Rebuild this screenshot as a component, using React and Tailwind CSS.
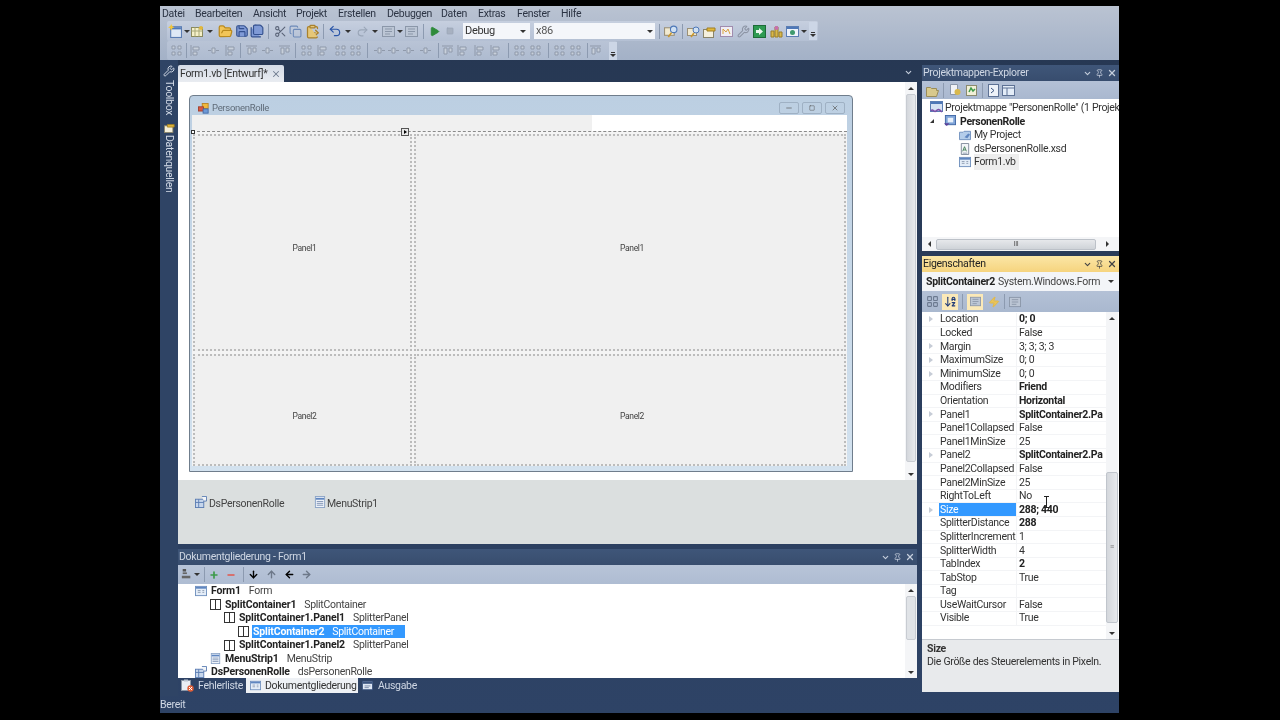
import { ChevronDown, Pin, X, Play, Square, Minus, Plus, ArrowDown, ArrowUp, ArrowLeft, ArrowRight, Undo2, Redo2, Scissors, Copy, ClipboardPaste, Save, SaveAll, FolderOpen, Zap, ArrowDownAZ, LayoutGrid, Wrench } from "lucide-react";

const font = "font-['Roboto','Liberation_Sans',Arial,sans-serif]";

const menu = [
  ["Datei", "w-[33px]"],
  ["Bearbeiten", "w-[58px]"],
  ["Ansicht", "w-[43px]"],
  ["Projekt", "w-[42px]"],
  ["Erstellen", "w-[49px]"],
  ["Debuggen", "w-[54px]"],
  ["Daten", "w-[37px]"],
  ["Extras", "w-[39px]"],
  ["Fenster", "w-[44px]"],
  ["Hilfe", "w-[30px]"],
];

const props = [
  { n: "Location", v: "0; 0", b: true, e: true },
  { n: "Locked", v: "False" },
  { n: "Margin", v: "3; 3; 3; 3", e: true },
  { n: "MaximumSize", v: "0; 0", e: true },
  { n: "MinimumSize", v: "0; 0", e: true },
  { n: "Modifiers", v: "Friend", b: true },
  { n: "Orientation", v: "Horizontal", b: true },
  { n: "Panel1", v: "SplitContainer2.Pa", b: true, e: true },
  { n: "Panel1Collapsed", v: "False" },
  { n: "Panel1MinSize", v: "25" },
  { n: "Panel2", v: "SplitContainer2.Pa", b: true, e: true },
  { n: "Panel2Collapsed", v: "False" },
  { n: "Panel2MinSize", v: "25" },
  { n: "RightToLeft", v: "No" },
  { n: "Size", v: "288; 440", b: true, e: true, sel: true },
  { n: "SplitterDistance", v: "288", b: true },
  { n: "SplitterIncrement", v: "1" },
  { n: "SplitterWidth", v: "4" },
  { n: "TabIndex", v: "2", b: true },
  { n: "TabStop", v: "True" },
  { n: "Tag", v: "" },
  { n: "UseWaitCursor", v: "False" },
  { n: "Visible", v: "True" },
];

/* small 13x13 drawings of the VS icons */
function Ico({ kind, size = 13 }) {
  const body = {
    form: (
      <>
        <rect x="0.5" y="1.5" width="12" height="10" fill="#e4edf8" stroke="#6f8fbd" />
        <rect x="1" y="2" width="11" height="2" fill="#5f86c0" />
        <path d="M3 6h3M3 8h3M8 6h2M8 8h2" stroke="#8f9db2" />
      </>
    ),
    solution: (
      <>
        <rect x="0.5" y="0.5" width="12" height="10" fill="#d6e2f3" stroke="#5b7db3" />
        <rect x="1" y="1" width="11" height="2" fill="#4e78b8" />
        <path d="M1 10c2-3 3 2 5 0s3-2 6 1" fill="none" stroke="#7a4fa8" strokeWidth="1.6" />
      </>
    ),
    project: (
      <>
        <rect x="1.5" y="0.5" width="11" height="10" fill="#7fa4d8" stroke="#3f66a5" />
        <rect x="4" y="3" width="6" height="5" fill="#e8f0fa" />
        <path d="M0 9l3 3 3-3" fill="#5c3f99" />
      </>
    ),
    myproject: (
      <>
        <path d="M0.5 3.5h4l1-1h7v9h-12z" fill="#b4cdea" stroke="#6f8fbd" />
        <path d="M6 9l4-4 2 1-3 4z" fill="#5f86c0" />
      </>
    ),
    xsd: (
      <>
        <path d="M2.5 0.5h8v12h-8z" fill="#f3f5f8" stroke="#7c8798" />
        <path d="M4 9l2-5 2 5M5 7.5h2" fill="none" stroke="#3f7a52" />
        <path d="M4 11h5" stroke="#8f9db2" />
      </>
    ),
    menustrip: (
      <>
        <rect x="1.5" y="0.5" width="10" height="12" fill="#eef3fa" stroke="#8ba3c6" />
        <rect x="2" y="2" width="9" height="2" fill="#5f86c0" />
        <path d="M3 6h7M3 8h7M3 10h7" stroke="#7f93b3" />
      </>
    ),
    dataset: (
      <>
        <rect x="0.5" y="3.5" width="9" height="9" fill="#c6d6ec" stroke="#5b7db3" />
        <path d="M0.5 7h9M4 3.5v9" stroke="#5b7db3" />
        <path d="M7.5 0.5h5v5h-3" fill="#f3f5f8" stroke="#5b7db3" />
      </>
    ),
    cubes: (
      <>
        <rect x="5" y="0.5" width="7" height="6" fill="#f0b93c" stroke="#b8801e" />
        <rect x="0.5" y="4.5" width="6" height="5" fill="#d9593f" stroke="#a03a28" />
        <rect x="6" y="7" width="6" height="5" fill="#6f9ad6" stroke="#3f66a5" />
      </>
    ),
    errors: (
      <>
        <rect x="0.5" y="1.5" width="9" height="10" fill="#e9eef5" stroke="#8a97a8" />
        <rect x="3" y="0.5" width="4" height="2" fill="#b8c2d0" />
        <circle cx="9.5" cy="9.5" r="3.2" fill="#e0603a" />
        <path d="M8 8l3 3M11 8l-3 3" stroke="#fff" />
      </>
    ),
    output: (
      <>
        <rect x="0.5" y="1.5" width="12" height="10" fill="#dfe8f5" stroke="#39537e" />
        <rect x="1" y="2" width="11" height="2.5" fill="#39537e" />
        <path d="M3 7h7M3 9h5" stroke="#6f82a0" />
      </>
    ),
    newproject: (
      <>
        <rect x="2.5" y="2.5" width="10" height="10" fill="#dfe9f6" stroke="#5b7db3" />
        <rect x="3" y="3" width="9" height="2" fill="#4e78b8" />
        <path d="M3 0l1 2 2 1-2 1-1 2-1-2-2-1 2-1z" fill="#f2c63a" />
      </>
    ),
    additem: (
      <>
        <rect x="0.5" y="2.5" width="11" height="9" fill="#f5f0c8" stroke="#8a8a5e" />
        <path d="M0.5 6h11M4 2.5v9M8 2.5v9" stroke="#a8a878" />
        <circle cx="10" cy="3" r="2" fill="#e2b83a" />
      </>
    ),
    nav: (
      <>
        <rect x="0.5" y="1.5" width="12" height="10" fill="#bcc6d5" stroke="#8b97a9" />
        <path d="M3 4h7M3 6.5h7M3 9h5" stroke="#8b97a9" />
      </>
    ),
    find: (
      <>
        <rect x="0.5" y="3.5" width="9" height="7" fill="#f2ead0" stroke="#9a9078" />
        <circle cx="9" cy="5" r="3" fill="#cfe0f3" stroke="#4e78b8" />
        <path d="M7 8l-3 4" stroke="#c9962c" strokeWidth="1.5" />
      </>
    ),
    props: (
      <>
        <rect x="0.5" y="4.5" width="10" height="8" fill="#f5f0dc" stroke="#8a8468" />
        <path d="M4 3h8v3H4z" fill="#e2b83a" stroke="#a07f22" />
      </>
    ),
    object: (
      <>
        <rect x="0.5" y="1.5" width="12" height="10" fill="#f0eef4" stroke="#a08cae" />
        <path d="M3 9V4l3 3 2-3 2 5" fill="none" stroke="#d9a23c" />
      </>
    ),
    start: (
      <>
        <rect x="0.5" y="0.5" width="12" height="12" fill="#2e9a52" stroke="#1d6b38" />
        <path d="M3 5h3V3l4 3.5L6 10V8H3z" fill="#eaf7ee" />
      </>
    ),
    team: (
      <>
        <path d="M1 12V6h3v6zM5 12V2h3v10zM9 12V7h3v5z" fill="#d8b84c" stroke="#9a7f28" />
        <circle cx="6.5" cy="3" r="2" fill="#c76fb0" />
      </>
    ),
    web: (
      <>
        <rect x="0.5" y="1.5" width="12" height="10" fill="#eef3fa" stroke="#5b7db3" />
        <rect x="1" y="2" width="11" height="2" fill="#4e78b8" />
        <circle cx="6.5" cy="7.5" r="2.5" fill="#3f9a6e" />
      </>
    ),
    folder: (
      <path d="M0.5 3.5h4l1 1h5v2h2l-2 6h-10z" fill="#d8c98c" stroke="#9a8c58" />
    ),
    refresh: (
      <>
        <rect x="1.5" y="1.5" width="10" height="10" fill="#f2f0d8" stroke="#8a8a6e" />
        <path d="M4 8l2-4 2 3 2-2" fill="none" stroke="#3f9a4a" strokeWidth="1.5" />
      </>
    ),
    showall: (
      <>
        <path d="M1.5 0.5h7v10h-7z" fill="#f0f2f6" stroke="#8b97a9" />
        <circle cx="8.5" cy="8" r="3" fill="#d8b84c" />
      </>
    ),
    code: (
      <>
        <rect x="1.5" y="0.5" width="10" height="12" fill="#eef2f8" stroke="#5e7295" />
        <path d="M4 4l3 2.5L4 9" fill="none" stroke="#39537e" />
      </>
    ),
    design: (
      <>
        <rect x="0.5" y="1.5" width="12" height="10" fill="#e4edf8" stroke="#5e7295" />
        <path d="M0.5 4h12M5 4v7" stroke="#5e7295" />
      </>
    ),
    outline: (
      <>
        <rect x="2" y="0" width="4" height="3" fill="#555" />
        <rect x="2" y="4" width="5" height="2" fill="#666" />
        <rect x="1" y="8" width="10" height="3" fill="#666" />
      </>
    ),
  }[kind];
  return (
    <svg width={size} height={size} viewBox="0 0 13 13" className="shrink-0">
      {body}
    </svg>
  );
}

function Sep() {
  return <span className="block shrink-0 w-px h-[15px] bg-[#8c9ab0]" />;
}

function Drop() {
  return <span className="block shrink-0 w-0 h-0 border-x-[3px] border-x-transparent border-t-[3px] border-t-[#333]" />;
}

function Slot({ w, children }) {
  return <span className={`flex ${w} h-full justify-center items-center shrink-0`}>{children}</span>;
}

function Grip() {
  return (
    <span className="w-[8px] h-[18px] shrink-0 bg-[#ccd6e6] flex flex-col items-center justify-end pb-[3px] gap-px">
      <span className="w-[4px] h-px bg-[#333]" />
      <Drop />
    </span>
  );
}

// pale disabled layout icons of the second toolbar
function LayoutIcon({ kind = 0 }) {
  const d = [
    "M2 1v11M4 3h6v3H4zM4 8h4v3H4z",
    "M1 2h11M3 4v6h3V4zM8 4v4h3V4z",
    "M1 6.5h3M9 6.5h3M5 4h3v5H5z",
    "M2 2h3v3H2zM8 2h3v3H8zM2 8h3v3H2zM8 8h3v3H8z",
  ][kind];
  return (
    <svg width="13" height="13" viewBox="0 0 13 13" className="shrink-0">
      <path d={d} fill="#c8d0db" stroke="#8f99aa" strokeWidth="1" />
    </svg>
  );
}

function Toolbar1() {
  return (
    <div className="flex items-center h-[20px] ml-[7px] w-[651px] rounded-[2px] bg-gradient-to-b from-[#c6cfdf] to-[#b4c0d4]">
      <Slot w="w-[16px]"><Ico kind="newproject" size={14} /></Slot>
      <Slot w="w-[8px]"><Drop /></Slot>
      <Slot w="w-[12px]"><Ico kind="additem" /></Slot>
      <Slot w="w-[14px]"><Drop /></Slot>
      <Slot w="w-[16px]"><FolderOpen size={15} className="shrink-0 text-[#b98a1e] fill-[#f2c558]" /></Slot>
      <Slot w="w-[18px]"><Save size={14} className="shrink-0 text-[#34518f] fill-[#7f9ad6]" /></Slot>
      <Slot w="w-[12px]"><SaveAll size={14} className="shrink-0 text-[#34518f] fill-[#7f9ad6]" /></Slot>
      <Slot w="w-[10px]"><Sep /></Slot>
      <Slot w="w-[14px]"><Scissors size={13} className="shrink-0 text-[#5a6478]" /></Slot>
      <Slot w="w-[16px]"><Copy size={13} className="shrink-0 text-[#6d8ab8]" /></Slot>
      <Slot w="w-[18px]"><ClipboardPaste size={15} className="shrink-0 text-[#a9812d] fill-[#e6c778]" /></Slot>
      <Slot w="w-[4px]"><Sep /></Slot>
      <Slot w="w-[20px]"><Undo2 size={14} className="shrink-0 text-[#2a55a8]" /></Slot>
      <Slot w="w-[6px]"><Drop /></Slot>
      <Slot w="w-[22px]"><Redo2 size={13} className="shrink-0 text-[#9aa6b8]" /></Slot>
      <Slot w="w-[4px]"><Drop /></Slot>
      <Slot w="w-[22px]"><Ico kind="nav" /></Slot>
      <Slot w="w-[2px]"><Drop /></Slot>
      <Slot w="w-[20px]"><Ico kind="nav" /></Slot>
      <Slot w="w-[4px]"><Sep /></Slot>
      <Slot w="w-[18px]"><Play size={11} className="shrink-0 text-[#2e8b3a] fill-[#2e8b3a]" /></Slot>
      <Slot w="w-[14px]"><Square size={8} className="shrink-0 text-[#98a3b5] fill-[#a7b1c1]" /></Slot>
      <span className="ml-[6px] w-[67px] h-[16px] shrink-0 bg-[#f4f6fa] flex items-center justify-between pl-[2px] pr-[4px] text-[11px] text-[#333]">
        Debug<Drop />
      </span>
      <span className="ml-[4px] w-[121px] h-[16px] shrink-0 bg-[#f4f6fa] flex items-center justify-between pl-[2px] pr-[2px] text-[11px] text-[#555]">
        x86<Drop />
      </span>
      <Slot w="w-[8px]"><Sep /></Slot>
      <Slot w="w-[16px]"><Ico kind="find" size={14} /></Slot>
      <Slot w="w-[6px]"><Sep /></Slot>
      <Slot w="w-[16px]"><Ico kind="find" /></Slot>
      <Slot w="w-[16px]"><Ico kind="props" /></Slot>
      <Slot w="w-[18px]"><Ico kind="object" /></Slot>
      <Slot w="w-[16px]"><Wrench size={13} className="shrink-0 text-[#8c94a4]" /></Slot>
      <Slot w="w-[16px]"><Ico kind="start" /></Slot>
      <Slot w="w-[18px]"><Ico kind="team" /></Slot>
      <Slot w="w-[14px]"><Ico kind="web" /></Slot>
      <Slot w="w-[10px]"><Drop /></Slot>
      <Grip />
    </div>
  );
}

function Toolbar2() {
  return (
    <div className="flex items-center h-[19px] ml-[7px] w-[450px] rounded-[2px] bg-gradient-to-b from-[#b9c4d6] to-[#aebbd0]">
      <Slot w="w-[18px]"><LayoutIcon kind={3} /></Slot>
      <Slot w="w-[2px]"><Sep /></Slot>
      <Slot w="w-[16px]"><LayoutIcon /></Slot>
      <Slot w="w-[20px]"><LayoutIcon kind={2} /></Slot>
      <Slot w="w-[14px]"><LayoutIcon /></Slot>
      <Slot w="w-[6px]"><Sep /></Slot>
      <Slot w="w-[16px]"><LayoutIcon kind={1} /></Slot>
      <Slot w="w-[16px]"><LayoutIcon kind={2} /></Slot>
      <Slot w="w-[18px]"><LayoutIcon kind={1} /></Slot>
      <Slot w="w-[4px]"><Sep /></Slot>
      <Slot w="w-[18px]"><LayoutIcon kind={3} /></Slot>
      <Slot w="w-[14px]"><LayoutIcon /></Slot>
      <Slot w="w-[22px]"><LayoutIcon kind={3} /></Slot>
      <Slot w="w-[8px]"><LayoutIcon kind={3} /></Slot>
      <Slot w="w-[16px]"><Sep /></Slot>
      <Slot w="w-[8px]"><LayoutIcon kind={2} /></Slot>
      <Slot w="w-[20px]"><LayoutIcon kind={2} /></Slot>
      <Slot w="w-[10px]"><LayoutIcon kind={2} /></Slot>
      <Slot w="w-[24px]"><LayoutIcon kind={2} /></Slot>
      <Slot w="w-[2px]"><Sep /></Slot>
      <Slot w="w-[16px]"><LayoutIcon kind={1} /></Slot>
      <Slot w="w-[14px]"><LayoutIcon /></Slot>
      <Slot w="w-[20px]"><LayoutIcon /></Slot>
      <Slot w="w-[12px]"><LayoutIcon /></Slot>
      <Slot w="w-[14px]"><Sep /></Slot>
      <Slot w="w-[8px]"><LayoutIcon kind={3} /></Slot>
      <Slot w="w-[24px]"><LayoutIcon kind={3} /></Slot>
      <Slot w="w-[2px]"><Sep /></Slot>
      <Slot w="w-[20px]"><LayoutIcon kind={3} /></Slot>
      <Slot w="w-[12px]"><LayoutIcon kind={3} /></Slot>
      <Slot w="w-[12px]"><Sep /></Slot>
      <Slot w="w-[4px]"><LayoutIcon kind={1} /></Slot>
      <span className="ml-auto"><Grip /></span>
    </div>
  );
}

function PanelTitle({ title, light }) {
  return (
    <div className={`h-[16px] flex items-center pl-[1px] pr-[2px] text-[10.5px] ${light ? "bg-gradient-to-b from-[#fbe6a6] to-[#f6d47e] text-[#222]" : "bg-gradient-to-b from-[#3f5679] to-[#384d6e] text-[#cfd7e4]"}`}>
      <span className="flex-1">{title}</span>
      <ChevronDown size={9} strokeWidth={3} className={light ? "text-[#444]" : "text-[#c5cedc]"} />
      <Pin size={9} className={`mx-[3px] ${light ? "text-[#444]" : "text-[#c5cedc]"}`} />
      <X size={10} strokeWidth={3} className={light ? "text-[#444]" : "text-[#c5cedc]"} />
    </div>
  );
}

function TreeRow({ pl, icon, bold, rest, sel }) {
  return (
    <div className={`h-[13.6px] flex items-center ${pl} whitespace-nowrap text-[10.5px]`}>
      {icon}
      <span className={`ml-[3px] flex items-center gap-[8px] h-[13.6px] pl-[1px] pr-[11px] ${sel ? "bg-[#3399ff] text-white" : "text-[#222]"}`}>
        <b className="tracking-[-0.15px]">{bold}</b>
        <span className={sel ? "" : "text-[#444]"}>{rest}</span>
      </span>
    </div>
  );
}

function SplitIcon() {
  return (
    <span className="w-[11px] h-[11px] border border-[#333] flex shrink-0 bg-white">
      <span className="w-1/2 border-r border-[#333]" />
    </span>
  );
}

function SplitPanel({ w, h, label }) {
  return (
    <div className={`${w} ${h} pt-[12px] pl-[4px] border-2 border-dotted border-[#bcbcbc] bg-[#f0f0f0] flex items-center justify-center text-[8.5px] text-[#444]`}>
      {label}
    </div>
  );
}

function VBar({ thumb }) {
  return (
    <div className="w-[12px] flex flex-col items-center bg-[#f4f5f7]">
      <span className="h-[12px] flex items-center"><span className="w-0 h-0 border-x-[3px] border-x-transparent border-b-[3px] border-b-[#333]" /></span>
      <span className="flex-1 w-full flex flex-col">{thumb}</span>
      <span className="h-[12px] flex items-center"><span className="w-0 h-0 border-x-[3px] border-x-transparent border-t-[3px] border-t-[#333]" /></span>
    </div>
  );
}

export default function App() {
  return (
    <div className={`w-[1280px] h-[720px] bg-black overflow-hidden pl-[160px] pt-[6px] tracking-[-0.3px] ${font}`}>
      <div className="w-[959px] h-[707px] flex flex-col bg-gradient-to-b from-[#263752] to-[#2e4366] blur-[0.5px]">
        {/* MENU + TOOLBARS */}
        <div className="h-[54px] bg-gradient-to-b from-[#bac3d2] to-[#a3b1c7]">
          <div className="h-[15px] flex items-center pl-[2px] text-[10.5px] text-[#2c3444]">
            {menu.map(([m, w]) => <span key={m} className={w}>{m}</span>)}
          </div>
          <Toolbar1 />
          <Toolbar2 />
        </div>

        <div className="flex-1 flex min-h-0">
          {/* TOOLBOX STRIP */}
          <div className="w-[18px] pt-[5px] flex flex-col items-center bg-[#2f4465] text-[#d5dce8] text-[10.5px]">
            <Wrench size={12} className="text-[#cdd5e2]" />
            <span className="[writing-mode:vertical-rl] mt-[3px] h-[42px]">Toolbox</span>
            <Ico kind="props" size={11} />
            <span className="[writing-mode:vertical-rl] mt-[2px]">Datenquellen</span>
          </div>

          {/* CENTER */}
          <div className="w-[739px] flex flex-col">
            <div className="h-[22px] flex items-end">
              <div className="w-[106px] h-[17px] flex items-center justify-between pl-[2px] pr-[3px] whitespace-nowrap rounded-t-[2px] bg-gradient-to-b from-[#d4dbe6] to-[#e9ecf1] text-[10.5px] text-[#333]">
                Form1.vb [Entwurf]*
                <X size={10} strokeWidth={2.5} className="text-[#6f7c90]" />
              </div>
              <ChevronDown size={9} strokeWidth={3} className="ml-auto mr-[4px] mb-[5px] text-[#c5cedc]" />
            </div>

            <div className="h-[398px] flex bg-white">
              <div className="flex-1 pl-[11px] pt-[13px]">
                {/* FORM */}
                <div className="relative w-[664px] h-[377px] rounded-t-[4px] border border-[#6f7d8c] bg-gradient-to-b from-[#bccfe2] to-[#d3e2ef] flex flex-col px-[1px] pb-[5px]">
                  <div className="h-[20px] flex items-center pt-[5px] pl-[7px] pr-[6px] text-[9.5px] text-[#5f6b78]">
                    <Ico kind="cubes" size={11} />
                    <span className="ml-[3px] flex-1">PersonenRolle</span>
                    <span className="w-[20px] h-[12px] border border-[#9fb1c4] rounded-[2px] flex items-center justify-center mr-[3px]"><Minus size={8} className="text-[#555]" /></span>
                    <span className="w-[20px] h-[12px] border border-[#9fb1c4] rounded-[2px] flex items-center justify-center mr-[3px]"><Square size={6} className="text-[#555]" /></span>
                    <span className="w-[20px] h-[12px] border border-[#9fb1c4] rounded-[2px] flex items-center justify-center"><X size={8} className="text-[#555]" /></span>
                  </div>
                  <div className="flex-1 ml-[1px] mr-[4px] bg-[#f4f4f4] flex flex-col">
                    <div className="h-[16px] flex">
                      <div className="w-[400px] bg-[#f0f0f0]" />
                      <div className="flex-1 bg-white" />
                    </div>
                    <div className="flex-1 border-t border-dashed border-[#8a8a8a] pl-[1px] pt-[2px] flex gap-[2px]">
                      <div className="flex flex-col gap-[3px]">
                        <SplitPanel w="w-[219px]" h="h-[217px]" label="Panel1" />
                        <SplitPanel w="w-[219px]" h="h-[112px]" label="Panel2" />
                      </div>
                      <div className="flex flex-col gap-[3px]">
                        <SplitPanel w="w-[432px]" h="h-[217px]" label="Panel1" />
                        <SplitPanel w="w-[432px]" h="h-[112px]" label="Panel2" />
                      </div>
                    </div>
                  </div>
                  <span className="absolute left-[1px] top-[34px] w-[4px] h-[4px] border border-[#333] bg-white" />
                  <span className="absolute left-[211px] top-[32px] w-[8px] h-[8px] border border-[#555] bg-[#e8e8e8] flex items-center justify-center">
                    <span className="w-0 h-0 border-y-[2px] border-y-transparent border-l-[3px] border-l-black" />
                  </span>
                </div>
              </div>
              <VBar thumb={<span className="h-[368px] mx-[1px] bg-gradient-to-r from-[#d4d7dc] to-[#e8eaed] border border-[#c8ccd2] rounded-[2px]" />} />
            </div>

            {/* COMPONENT TRAY */}
            <div className="h-[64px] bg-[#dbdfdf] flex items-start pt-[16px] pl-[17px] text-[10.5px] text-[#444]">
              <Ico kind="dataset" size={12} />
              <span className="ml-[2px] w-[105px]">DsPersonenRolle</span>
              <Ico kind="menustrip" size={12} />
              <span className="ml-[1px]">MenuStrip1</span>
            </div>

            {/* DOCUMENT OUTLINE */}
            <div className="mt-[5px]">
              <PanelTitle title="Dokumentgliederung - Form1" />
              <div className="h-[19px] flex items-center bg-gradient-to-b from-[#b8c4d8] to-[#aebcd2]">
                <Slot w="w-[16px]"><Ico kind="outline" size={11} /></Slot>
                <Slot w="w-[6px]"><Drop /></Slot>
                <Slot w="w-[8px]"><Sep /></Slot>
                <Slot w="w-[12px]"><Plus size={10} strokeWidth={4} className="shrink-0 text-[#3d9a4a]" /></Slot>
                <Slot w="w-[22px]"><Minus size={10} strokeWidth={4} className="shrink-0 text-[#e2574c]" /></Slot>
                <Slot w="w-[2px]"><Sep /></Slot>
                <Slot w="w-[18px]"><ArrowDown size={11} strokeWidth={3} className="shrink-0 text-black" /></Slot>
                <Slot w="w-[18px]"><ArrowUp size={11} strokeWidth={3} className="shrink-0 text-[#6d7889]" /></Slot>
                <Slot w="w-[18px]"><ArrowLeft size={11} strokeWidth={3} className="shrink-0 text-black" /></Slot>
                <Slot w="w-[16px]"><ArrowRight size={11} strokeWidth={3} className="shrink-0 text-[#6d7889]" /></Slot>
              </div>
              <div className="h-[94px] flex bg-white">
                <div className="flex-1 overflow-hidden">
                  <TreeRow pl="pl-[17px]" icon={<Ico kind="form" size={12} />} bold="Form1" rest="Form" />
                  <TreeRow pl="pl-[32px]" icon={<SplitIcon />} bold="SplitContainer1" rest="SplitContainer" />
                  <TreeRow pl="pl-[46px]" icon={<SplitIcon />} bold="SplitContainer1.Panel1" rest="SplitterPanel" />
                  <TreeRow pl="pl-[60px]" icon={<SplitIcon />} bold="SplitContainer2" rest="SplitContainer" sel />
                  <TreeRow pl="pl-[46px]" icon={<SplitIcon />} bold="SplitContainer1.Panel2" rest="SplitterPanel" />
                  <TreeRow pl="pl-[32px]" icon={<Ico kind="menustrip" size={11} />} bold="MenuStrip1" rest="MenuStrip" />
                  <TreeRow pl="pl-[17px]" icon={<Ico kind="dataset" size={12} />} bold="DsPersonenRolle" rest="dsPersonenRolle" />
                </div>
                <VBar thumb={<span className="h-[44px] mx-[1px] bg-[#e0e3e7] border border-[#c8ccd2] rounded-[2px]" />} />
              </div>
              <div className="h-[18px] flex items-start pl-[3px] text-[10.5px] text-[#cfd7e4]">
                <span className="flex items-center gap-[4px] h-[15px] w-[65px]"><Ico kind="errors" size={13} />Fehlerliste</span>
                <span className="flex items-center gap-[4px] h-[15px] w-[112px] px-[4px] bg-[#eef1f5] text-[#333] whitespace-nowrap"><Ico kind="form" size={11} />Dokumentgliederung</span>
                <span className="flex items-center gap-[5px] h-[15px] pl-[4px]"><Ico kind="output" size={11} />Ausgabe</span>
              </div>
            </div>
          </div>

          {/* RIGHT COLUMN */}
          <div className="w-[197px] ml-[5px] pt-[5px] flex flex-col">
            <PanelTitle title="Projektmappen-Explorer" />
            <div className="h-[18px] flex items-center pl-[3px] bg-gradient-to-b from-[#b4c1d6] to-[#a9b8cf]">
              <Slot w="w-[14px]"><Ico kind="folder" /></Slot>
              <Slot w="w-[8px]"><Sep /></Slot>
              <Slot w="w-[16px]"><Ico kind="showall" /></Slot>
              <Slot w="w-[16px]"><Ico kind="refresh" /></Slot>
              <Slot w="w-[6px]"><Sep /></Slot>
              <Slot w="w-[16px]"><Ico kind="code" /></Slot>
              <Slot w="w-[14px]"><Ico kind="design" /></Slot>
            </div>
            <div className="h-[138px] bg-white pt-[2px] text-[10.5px] text-[#333] overflow-hidden">
              <div className="h-[13.6px] flex items-center pl-[8px] whitespace-nowrap"><Ico kind="solution" size={13} /><span className="ml-[2px]">Projektmappe "PersonenRolle" (1 Projek</span></div>
              <div className="h-[13.6px] flex items-center pl-[8px]"><span className="w-0 h-0 border-b-[4px] border-b-[#333] border-l-[4px] border-l-transparent mr-[10px]" /><Ico kind="project" size={12} /><b className="ml-[4px] text-[#222]">PersonenRolle</b></div>
              <div className="h-[13.6px] flex items-center pl-[37px]"><Ico kind="myproject" size={12} /><span className="ml-[3px]">My Project</span></div>
              <div className="h-[13.6px] flex items-center pl-[37px]"><Ico kind="xsd" size={12} /><span className="ml-[3px]">dsPersonenRolle.xsd</span></div>
              <div className="h-[13.6px] flex items-center pl-[37px]"><Ico kind="form" size={12} /><span className="ml-[3px] bg-[#eeeeee] pr-[3px]">Form1.vb</span></div>
            </div>
            <div className="h-[14px] flex items-center bg-[#f4f5f7]">
              <span className="w-[14px] flex justify-center"><span className="w-0 h-0 border-y-[3px] border-y-transparent border-r-[3px] border-r-[#333]" /></span>
              <span className="w-[160px] h-[11px] bg-gradient-to-b from-[#e6e8eb] to-[#cfd3d8] border border-[#bcc1c8] rounded-[2px] flex items-center justify-center text-[7px] leading-none text-[#555]">III</span>
              <span className="flex-1 flex justify-center"><span className="w-0 h-0 border-y-[3px] border-y-transparent border-l-[3px] border-l-[#333]" /></span>
            </div>

            <div className="mt-[5px]">
              <PanelTitle title="Eigenschaften" light />
            </div>
            <div className="h-[19px] bg-[#f3f5f8] flex items-center pl-[4px] pr-[5px] text-[10.5px] text-[#444] whitespace-nowrap overflow-hidden">
              <b className="text-[#222]">SplitContainer2</b>
              <span className="ml-[3px] flex-1">System.Windows.Form</span>
              <Drop />
            </div>
            <div className="h-[21px] flex items-center pl-[4px] bg-gradient-to-b from-[#b4c1d6] to-[#a9b8cf]">
              <LayoutGrid size={13} className="text-[#6c7a90]" />
              <span className="ml-[3px] w-[16px] h-[16px] bg-[#fbe9b8] flex items-center justify-center"><ArrowDownAZ size={13} className="text-[#1f3a78]" /></span>
              <span className="mx-[4px]"><Sep /></span>
              <span className="w-[16px] h-[16px] bg-[#fbe9b8] flex items-center justify-center"><Ico kind="nav" size={11} /></span>
              <Zap size={12} className="ml-[5px] text-[#e2b84a] fill-[#e8c45a]" />
              <span className="mx-[4px]"><Sep /></span>
              <Ico kind="nav" size={12} />
            </div>
            <div className="h-[327px] flex bg-white pr-[1px]">
              <div className="flex-1 pt-[1px] text-[10.5px] text-[#333]">
                {props.map((p) => (
                  <div key={p.n} className="h-[13.6px] flex items-center border-b border-[#f3f4f6]">
                    <span className="w-[17px] flex justify-center">
                      {p.e && <span className="w-0 h-0 border-y-[3.5px] border-y-transparent border-l-[4px] border-l-[#c6ccd6]" />}
                    </span>
                    <span className={`w-[78px] shrink-0 h-full flex items-center pl-[1px] border-r border-[#f3f4f6] ${p.sel ? "bg-[#3399ff] text-white" : ""}`}>{p.n}</span>
                    <span className={`relative ml-[2px] whitespace-nowrap ${p.b ? "font-bold text-[#222]" : ""}`}>
                      {p.v}
                      {p.sel && (
                        <svg width="7" height="12" viewBox="0 0 7 12" className="absolute left-[24px] top-[-6px]">
                          <path d="M1 0.5h5M3.5 0.5v11M1 11.5h5" fill="none" stroke="#222" />
                        </svg>
                      )}
                    </span>
                  </div>
                ))}
              </div>
              <VBar thumb={<><span className="h-[148px]" /><span className="h-[151px] bg-gradient-to-r from-[#d4d7dc] to-[#e8eaed] border border-[#c0c5cc] rounded-[2px] flex items-center justify-center text-[7px] text-[#777]">≡</span></>} />
            </div>
            <div className="h-[53px] bg-[#e8eaec] border-t border-[#c6cad0] pl-[5px] pt-[2px] text-[10.5px] leading-[13px] text-[#333]">
              <b>Size</b>
              <p>Die Größe des Steuerelements in Pixeln.</p>
            </div>
          </div>
        </div>

        {/* STATUS */}
        <div className="h-[17px] flex items-center text-[10.5px] text-[#cfd7e4]">Bereit</div>
      </div>
    </div>
  );
}
